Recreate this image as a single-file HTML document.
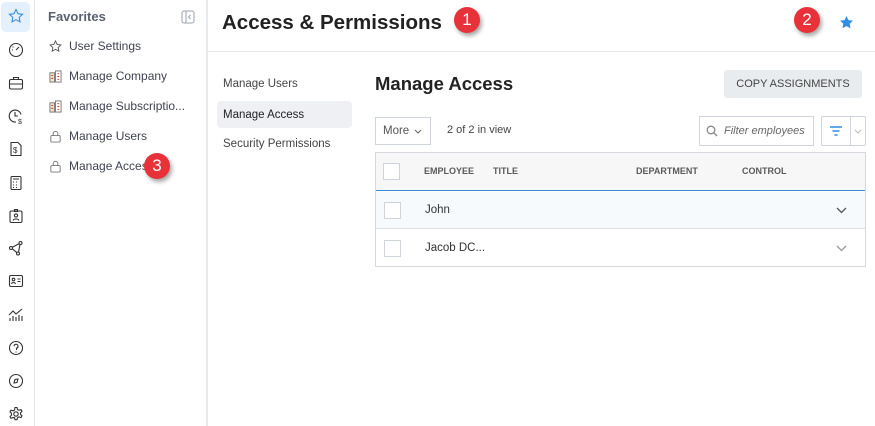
<!DOCTYPE html><html><head><style>
*{box-sizing:border-box;margin:0;padding:0}
body{width:875px;height:426px;overflow:hidden;background:#fff;font-family:"Liberation Sans",sans-serif;color:#333;position:relative}
.strip{position:absolute;left:0;top:0;width:35px;height:426px;border-right:1px solid #e3e6ea;background:#fff}
.strip svg{position:absolute;left:8px;width:16px;height:16px}
.fav{position:absolute;left:35px;top:0;width:173px;height:426px;border-right:2px solid #e8eaed}
.fav h3{position:absolute;left:13px;top:9px;font-size:13px;font-weight:bold;color:#5a6270}
.fi{position:absolute;left:14px;font-size:12px;color:#3f4352;display:flex;align-items:center;gap:7px}
.fi svg{width:13px;height:13px}
.hdr{position:absolute;left:208px;top:0;right:0;height:52px;border-bottom:1px solid #e3e6ea}
.hdr h1{position:absolute;left:14px;top:11px;font-size:20.5px;font-weight:bold;color:#222}
.nav div{position:absolute;left:217px;width:135px;height:27px;font-size:11.5px;color:#444;padding:8px 6px}
.badge{position:absolute;width:26px;height:26px;border-radius:50%;background:#e8323a;color:#fff;font-size:17px;text-align:center;line-height:26px;box-shadow:2px 3px 4px rgba(0,0,0,.35)}
.cb{position:absolute;width:17px;height:17px;border:1px solid #cfd4da;background:#fff}
.th{position:absolute;top:166px;font-size:9px;font-weight:bold;color:#5a5a5a}
</style></head><body>
<div class="strip">
<div style="position:absolute;left:1px;top:2px;width:29px;height:30px;background:#e4f0fb;border-radius:5px"></div>
<svg style="top:8px" viewBox="0 0 16 16" fill="none" stroke="#3a8fd8" stroke-width="1.1"><path d="M8 1.5l2 4.2 4.5.6-3.3 3.1.8 4.5L8 11.7l-4 2.2.8-4.5L1.5 6.3 6 5.7z"/></svg>
<svg style="top:42px" viewBox="0 0 16 16" fill="none" stroke="#333" stroke-width="1.1"><circle cx="8" cy="8" r="6.5"/><path d="M8 8l3-3M5 4.5v1M4 8h1"/></svg>
<svg style="top:75px" viewBox="0 0 16 16" fill="none" stroke="#333" stroke-width="1.1"><rect x="1.5" y="4.5" width="13" height="9.5" rx="1.5"/><path d="M5.5 4.5V2.5h5v2M1.5 9h13"/></svg>
<svg style="top:108px" viewBox="0 0 16 16" fill="none" stroke="#333" stroke-width="1.1"><path d="M13 6.5A6 6 0 1 0 8 14"/><path d="M7 4v4h3"/><text x="10" y="16" font-size="7" fill="#333" stroke="none">$</text></svg>
<svg style="top:141px" viewBox="0 0 16 16" fill="none" stroke="#333" stroke-width="1.1"><path d="M3 1.5h7l3 3v10H3z"/><text x="5" y="12" font-size="8" fill="#333" stroke="none">$</text></svg>
<svg style="top:175px" viewBox="0 0 16 16" fill="none" stroke="#333" stroke-width="1.1"><rect x="3" y="1.5" width="10" height="13" rx="1"/><path d="M5 4h6M5 7h1M8 7h1M11 7h0M5 10h1M8 10h1M5 12.5h1M8 12.5h1"/></svg>
<svg style="top:208px" viewBox="0 0 16 16" fill="none" stroke="#333" stroke-width="1.1"><rect x="2" y="3" width="12" height="11.5" rx="1.5"/><circle cx="8" cy="7.5" r="1.6"/><path d="M5 12.5c1-2 5-2 6 0M6.5 1.5h3v2h-3z"/></svg>
<svg style="top:240px" viewBox="0 0 16 16" fill="none" stroke="#333" stroke-width="1.1"><circle cx="3" cy="8" r="1.5"/><circle cx="12.5" cy="3" r="1.5"/><circle cx="10" cy="13.5" r="1.5"/><path d="M4.3 7.2l6.8-3.5M4.3 8.8l4.5 3.8M12 4.5l-1.5 7.5"/></svg>
<svg style="top:273px" viewBox="0 0 16 16" fill="none" stroke="#333" stroke-width="1.1"><rect x="1.5" y="2.5" width="13" height="11" rx="1.5"/><circle cx="5.5" cy="6.5" r="1.3"/><path d="M3.5 11c.5-2 3.5-2 4 0M9.5 6h3M9.5 8.5h3"/></svg>
<svg style="top:306px" viewBox="0 0 16 16" fill="none" stroke="#333" stroke-width="1.1"><path d="M1 9l4-4 3 3 6-5M2 15v-3M5 15v-5M8 15v-4M11 15v-6M14 15v-5"/></svg>
<svg style="top:340px" viewBox="0 0 16 16" fill="none" stroke="#333" stroke-width="1.1"><circle cx="8" cy="8" r="6.5"/><path d="M6 6.2a2 2 0 1 1 2.5 2V10M8 11.5v1"/></svg>
<svg style="top:373px" viewBox="0 0 16 16" fill="none" stroke="#333" stroke-width="1.1"><circle cx="8" cy="8" r="6.5"/><path d="M6 10l1-3.5L10 6l-1 3.5z"/></svg>
<svg style="top:406px" viewBox="0 0 16 16" fill="none" stroke="#333" stroke-width="1.1"><circle cx="8" cy="8" r="2.2"/><path d="M7 1.5h2l.5 2 1.5.8 2-.7 1 1.7-1.5 1.5v1.6l1.5 1.5-1 1.7-2-.7-1.5.8-.5 2H7l-.5-2L5 11.6l-2 .7-1-1.7 1.5-1.5V7.4L2 5.9l1-1.7 2 .7 1.5-.8z"/></svg>
</div>
<div class="fav">
<h3>Favorites</h3>
<svg style="position:absolute;left:146px;top:10px;width:14px;height:14px" viewBox="0 0 14 14" fill="none" stroke="#9aa3b0"><rect x="1" y="1" width="12" height="12" rx="2"/><path d="M5 1v12M9.5 5L7.5 7l2 2"/></svg>
<div class="fi" style="top:39px"><svg viewBox="0 0 14 14" fill="none" stroke="#555"><path d="M7 1l1.8 3.8 4 .5-3 2.8.8 4L7 10l-3.6 2.1.8-4-3-2.8 4-.5z"/></svg>User Settings</div>
<div class="fi" style="top:69px"><svg viewBox="0 0 14 14" fill="none" stroke="#777"><rect x="1" y="3" width="5" height="10" fill="#f3e1c9"/><rect x="7" y="1" width="6" height="12"/><path d="M9 4h2M9 7h2M9 10h2M2.5 6h2M2.5 9h2" stroke="#c0392b"/></svg>Manage Company</div>
<div class="fi" style="top:99px"><svg viewBox="0 0 14 14" fill="none" stroke="#777"><rect x="1" y="3" width="5" height="10" fill="#f3e1c9"/><rect x="7" y="1" width="6" height="12"/><path d="M9 4h2M9 7h2M9 10h2M2.5 6h2M2.5 9h2" stroke="#c0392b"/></svg>Manage Subscriptio...</div>
<div class="fi" style="top:129px"><svg viewBox="0 0 14 14" fill="none" stroke="#777"><rect x="2" y="6" width="10" height="7" rx="1"/><path d="M4.5 6V4a2.5 2.5 0 0 1 5 0v2"/></svg>Manage Users</div>
<div class="fi" style="top:159px"><svg viewBox="0 0 14 14" fill="none" stroke="#777"><rect x="2" y="6" width="10" height="7" rx="1"/><path d="M4.5 6V4a2.5 2.5 0 0 1 5 0v2"/></svg>Manage Access</div>
</div>
<div class="hdr"><h1>Access &amp; Permissions</h1>
<svg style="position:absolute;left:631px;top:15px;width:15px;height:15px" viewBox="0 0 16 16" fill="#2f8ee5"><path d="M8 1l2.1 4.4 4.8.6-3.5 3.3.9 4.8L8 11.8l-4.3 2.3.9-4.8L1.1 6l4.8-.6z"/></svg>
</div>
<div class="badge" style="left:454px;top:7px">1</div>
<div class="badge" style="left:794px;top:7px">2</div>
<div class="badge" style="left:144px;top:153px">3</div>
<div class="nav"><div style="top:70px">Manage Users</div><div style="top:101px;background:#eef0f3;border-radius:4px;color:#222">Manage Access</div><div style="top:130px">Security Permissions</div></div>
<div style="position:absolute;left:375px;top:73px;font-size:18.5px;font-weight:bold;color:#222">Manage Access</div>
<div style="position:absolute;left:724px;top:70px;width:138px;height:28px;background:#e9ecef;border-radius:3px;font-size:11px;color:#444;text-align:center;line-height:28px">COPY ASSIGNMENTS</div>
<div style="position:absolute;left:375px;top:117px;width:56px;height:28px;border:1px solid #d0d5db;font-size:11.5px;color:#555;padding:7px 7px">More</div>
<svg style="position:absolute;left:414px;top:129px;width:8px;height:5px" viewBox="0 0 8 5" fill="none" stroke="#666"><path d="M1 1l3 3 3-3"/></svg>
<div style="position:absolute;left:447px;top:124px;font-size:11px;color:#444">2 of 2 in view</div>
<div style="position:absolute;left:699px;top:116px;width:115px;height:30px;border:1px solid #d0d5db;font-size:11px;color:#666;font-style:italic;padding:8px 0 0 24px;overflow:hidden;white-space:nowrap">Filter employees</div>
<svg style="position:absolute;left:706px;top:125px;width:12px;height:12px" viewBox="0 0 12 12" fill="none" stroke="#888" stroke-width="1.3"><circle cx="5" cy="5" r="3.8"/><path d="M8 8l3 3"/></svg>
<div style="position:absolute;left:821px;top:116px;width:45px;height:30px;border:1px solid #d0d5db;border-radius:2px"><div style="position:absolute;left:28px;top:0;width:1px;height:28px;background:#d0d5db"></div>
<svg style="position:absolute;left:7px;top:8px;width:14px;height:12px" viewBox="0 0 14 12" stroke="#2f8ee5" stroke-width="1.4"><path d="M1 2h12M3.5 6h7M5.5 10h3"/></svg>
<svg style="position:absolute;left:32px;top:12px;width:8px;height:5px" viewBox="0 0 8 5" fill="none" stroke="#bbb"><path d="M1 1l3 3 3-3"/></svg></div>
<div style="position:absolute;left:375px;top:152px;width:491px;height:115px;border:1px solid #d5d9de">
<div style="position:absolute;left:0;top:0;width:489px;height:38px;background:#f7f7f7;border-bottom:1px solid #3b8ad6"></div>
<div style="position:absolute;left:0;top:39px;width:489px;height:37px;background:#f6fafd;border-bottom:1px solid #dde1e5"></div>
</div>
<div class="cb" style="left:383px;top:163px"></div>
<div class="cb" style="left:384px;top:202px"></div>
<div class="cb" style="left:384px;top:240px"></div>
<div class="th" style="left:424px">EMPLOYEE</div><div class="th" style="left:493px">TITLE</div><div class="th" style="left:636px">DEPARTMENT</div><div class="th" style="left:742px">CONTROL</div>
<div style="position:absolute;left:425px;top:204px;font-size:11.5px;color:#333">John</div>
<div style="position:absolute;left:425px;top:242px;font-size:11.5px;color:#333">Jacob DC...</div>
<svg style="position:absolute;left:836px;top:207px;width:11px;height:7px" viewBox="0 0 11 7" fill="none" stroke="#555" stroke-width="1.3"><path d="M1 1l4.5 4.5L10 1"/></svg>
<svg style="position:absolute;left:836px;top:245px;width:11px;height:7px" viewBox="0 0 11 7" fill="none" stroke="#999" stroke-width="1.3"><path d="M1 1l4.5 4.5L10 1"/></svg>
</body></html>
